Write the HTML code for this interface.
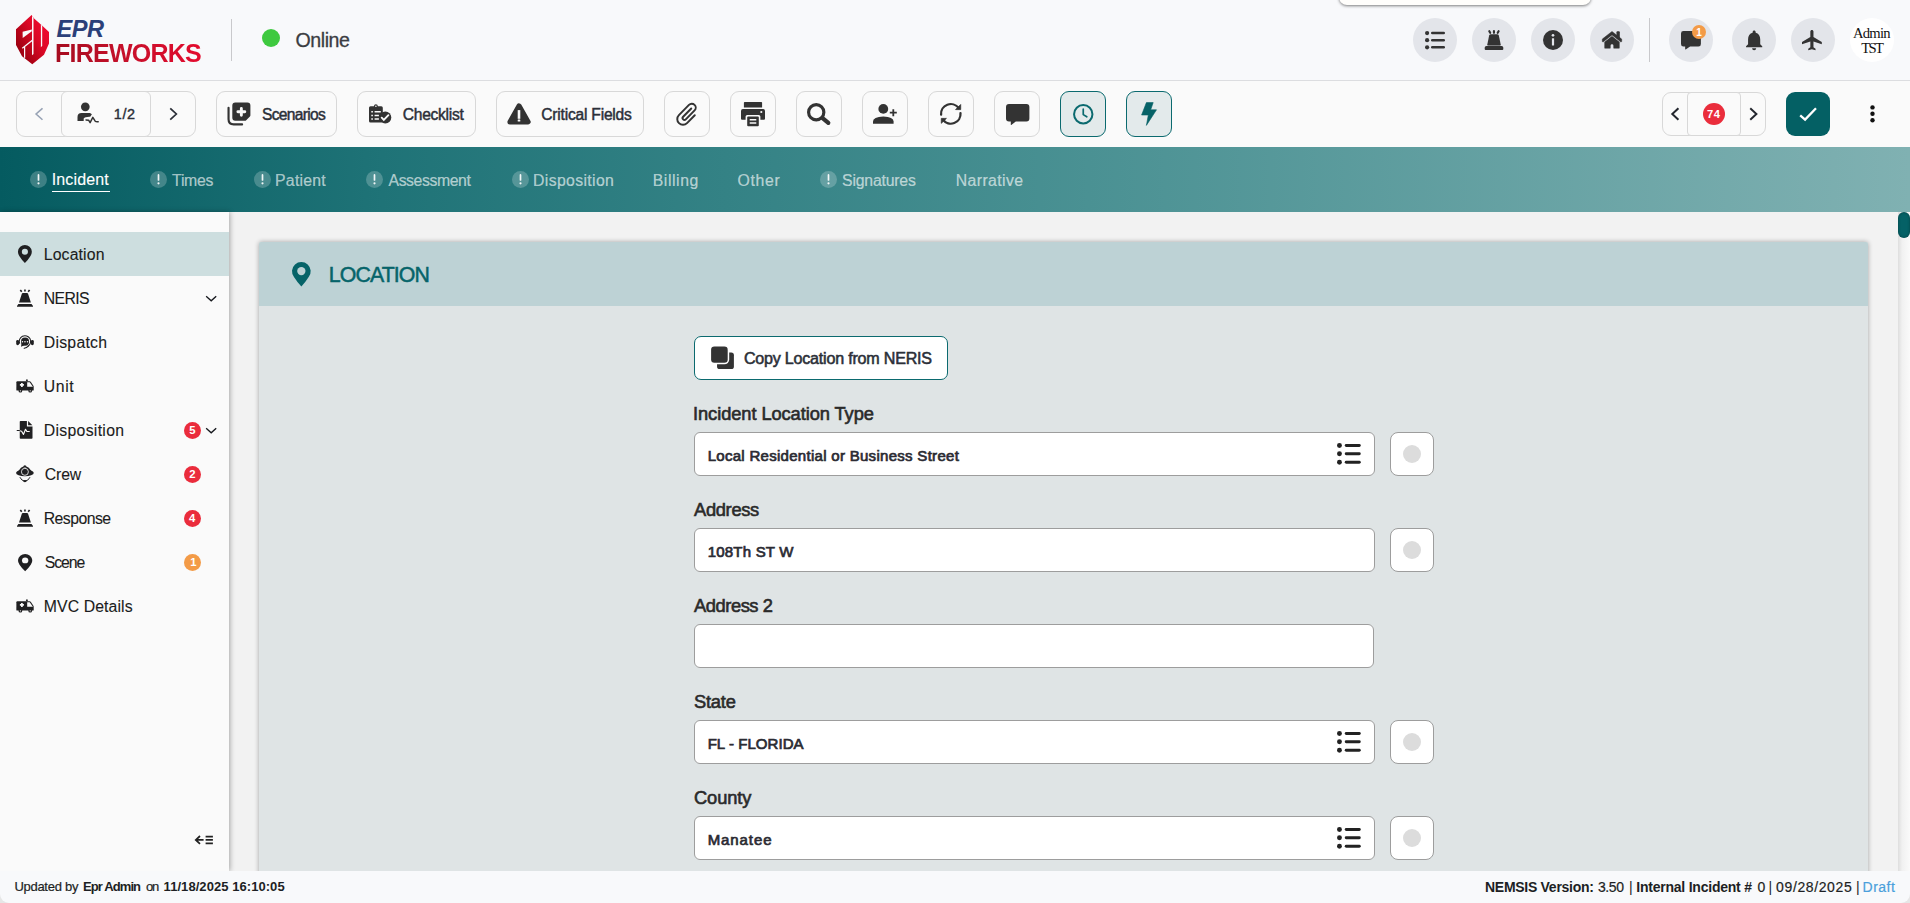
<!DOCTYPE html>
<html lang="en"><head><meta charset="utf-8"><title>EPR Fireworks - Incident</title>
<style>
*{box-sizing:border-box}
html,body{margin:0;padding:0}
body{width:1910px;height:903px;overflow:hidden;position:relative;background:#f2f2f2;font-family:"Liberation Sans",sans-serif;color:#222}
.a{position:absolute}
.t{position:absolute;white-space:nowrap;transform-origin:0 0;display:block}
svg{position:absolute;overflow:visible}
#hdr{left:0;top:0;width:1910px;height:81px;background:#f8f9fb;border-bottom:1px solid #dcdde0}
#tip{left:1339px;top:-20px;width:252px;height:25px;background:#fffefb;border-radius:8px;box-shadow:0 1px 3px rgba(0,0,0,.5)}
.vsep{width:1px;background:#c9c9cc}
.circ{width:44px;height:44px;border-radius:50%;background:#e3e5ea}
#tb{left:0;top:81px;width:1910px;height:66px;background:#fafafa}
.btn{border:1px solid #d8d8d8;border-radius:9px;background:#fafafa}
.btn.on{border-color:#0b6a6f;background:#e3eaeb}
#tabs{left:0;top:147px;width:1910px;height:65px;background:linear-gradient(90deg,#055b60 0%,#1f7377 20%,#348285 38%,#4a9193 57%,#80b1b2 100%)}
.ex{width:17px;height:17px;border-radius:50%;background:rgba(255,255,255,.22)}
#side{left:0;top:212px;width:229px;height:659px;background:#fafafa;box-shadow:1px 0 5px rgba(0,0,0,.32)}
#sel{left:0;top:20px;width:229px;height:44px;background:#cddedf}
.bdg{width:17px;height:17px;border-radius:50%;background:#ea2c3c}
#card{left:259px;top:242px;width:1609px;height:640px;background:#dfe4e5;border-radius:2px 2px 0 0;box-shadow:0 0 5px rgba(0,0,0,.33)}
#chead{left:0;top:0;width:1609px;height:64px;background:#bdd2d5;border-radius:2px 2px 0 0}
.inp{height:44px;background:#fff;border:1px solid #9d9d9d;border-radius:6px}
.sq{width:44px;height:44px;background:#fff;border:1px solid #9d9d9d;border-radius:8px}
.sq i{position:absolute;left:12px;top:12px;width:18px;height:18px;border-radius:50%;background:#dcdcdc}
#footbg{left:0;top:885px;width:1910px;height:18px;background:#e6e6e6}
#foot{left:0;top:871px;width:1910px;height:32px;background:#f8f9fb;border-radius:0 0 9px 9px}
#strack{left:1898px;top:212px;width:12px;height:659px;background:linear-gradient(90deg,#dedede 0,#f1f1f1 35%,#fafafa 100%)}
#sthumb{left:1898px;top:212px;width:12px;height:26px;border-radius:6px;background:#056166;box-shadow:inset 0 0 3px rgba(0,0,0,.35)}

</style></head>
<body>
<div class="a" id="hdr"></div>
<div class="a" id="tip"></div>
<div class="a vsep" style="left:231px;top:19px;height:42px"></div>
<div class="a" style="left:262px;top:29px;width:18px;height:18px;border-radius:50%;background:#3ec93f"></div>
<!-- header circles -->
<div class="a circ" style="left:1413px;top:18px"></div>
<div class="a circ" style="left:1472px;top:18px"></div>
<div class="a circ" style="left:1531px;top:18px"></div>
<div class="a circ" style="left:1590px;top:18px"></div>
<div class="a vsep" style="left:1649px;top:18px;height:44px"></div>
<div class="a circ" style="left:1669px;top:18px"></div>
<div class="a circ" style="left:1732px;top:18px"></div>
<div class="a circ" style="left:1791px;top:18px"></div>
<div class="a circ" style="left:1850px;top:18px;background:#fff"></div>
<!-- toolbar -->
<div class="a" id="tb"></div>
<div class="a btn" style="left:16px;top:91px;width:180px;height:46px"></div>
<div class="a btn" style="left:61px;top:91px;width:90px;height:46px;border-radius:6px"></div>
<div class="a btn" style="left:216px;top:91px;width:121px;height:46px"></div>
<div class="a btn" style="left:357px;top:91px;width:119px;height:46px"></div>
<div class="a btn" style="left:496px;top:91px;width:148px;height:46px"></div>
<div class="a btn" style="left:664px;top:91px;width:46px;height:46px"></div>
<div class="a btn" style="left:730px;top:91px;width:46px;height:46px"></div>
<div class="a btn" style="left:796px;top:91px;width:46px;height:46px"></div>
<div class="a btn" style="left:862px;top:91px;width:46px;height:46px"></div>
<div class="a btn" style="left:928px;top:91px;width:46px;height:46px"></div>
<div class="a btn" style="left:994px;top:91px;width:46px;height:46px"></div>
<div class="a btn on" style="left:1060px;top:91px;width:46px;height:46px"></div>
<div class="a btn on" style="left:1126px;top:91px;width:46px;height:46px"></div>
<div class="a btn" style="left:1662px;top:92px;width:104px;height:44px"></div>
<div class="a btn" style="left:1687px;top:92px;width:54px;height:44px;border-radius:4px"></div>
<div class="a" style="left:1703px;top:103px;width:22px;height:22px;border-radius:50%;background:#ea2d3c"></div>
<div class="a" style="left:1786px;top:92px;width:44px;height:44px;border-radius:9px;background:#046064"></div>
<!-- tabs -->
<div class="a" id="tabs"></div>
<div class="a" style="left:52px;top:190.6px;width:58px;height:1.3px;background:#fff"></div>
<!--EXCL-->
<!-- sidebar -->
<div class="a" id="side"><div class="a" id="sel"></div></div>
<div class="a bdg" style="left:184px;top:422px"></div>
<div class="a bdg" style="left:184px;top:466px"></div>
<div class="a bdg" style="left:184px;top:510px"></div>
<div class="a bdg" style="left:184px;top:554px;background:#f39b47"></div>
<!-- card -->
<div class="a" id="card"><div class="a" id="chead"></div></div>
<div class="a" style="left:694px;top:336px;width:254px;height:44px;background:#fff;border:1px solid #0b6a6f;border-radius:7px"></div>
<div class="a inp" style="left:694px;top:432px;width:681px"></div><div class="a sq" style="left:1390px;top:432px"><i></i></div>
<div class="a inp" style="left:694px;top:528px;width:681px"></div><div class="a sq" style="left:1390px;top:528px"><i></i></div>
<div class="a inp" style="left:694px;top:624px;width:680px"></div>
<div class="a inp" style="left:694px;top:720px;width:681px"></div><div class="a sq" style="left:1390px;top:720px"><i></i></div>
<div class="a inp" style="left:694px;top:816px;width:681px"></div><div class="a sq" style="left:1390px;top:816px"><i></i></div>
<!-- scrollbar + footer -->
<div class="a" id="strack"></div><div class="a" id="sthumb"></div>
<div class="a" id="footbg"></div><div class="a" id="foot"></div>
<svg style="left:16.00px;top:15.00px" width="33.00" height="49.30" viewBox="0 0 33 49.300" preserveAspectRatio="none" ><defs><linearGradient id="lg" x1="0.950" y1="0.200" x2="0.150" y2="0.850"><stop offset="0" stop-color="#f20a30"/><stop offset=".4" stop-color="#dc0826"/><stop offset="1" stop-color="#98000f"/></linearGradient></defs><path d="M15.600 0L18.100 3.600L26.600 11L33 16.900V28.400L28 39.800L16.300 49.300L6 41.200L0 29.900V14.300Z" fill="url(#lg)"/><path d="M16 0.600V40.300L17.500 39V2.800Z" fill="#f8f9fb"/><path d="M6.600 16.800L15.800 14.500V16.200L6.700 23Z" fill="#f8f9fb"/><path d="M6.300 33.200L16.400 25.200" stroke="#f8f9fb" stroke-width="1.300"/><path d="M8.600 31.600V42.800" stroke="#f8f9fb" stroke-width="1.250"/><path d="M24.900 9.600V32.200L26.200 30.800V10.800Z" fill="#f8f9fb"/></svg>
<svg style="left:1424.00px;top:29.70px" width="22.00" height="20.40" viewBox="0 0 22.00 20.40" preserveAspectRatio="none" ><circle cx="3.10" cy="3.10" r="2.10" fill="#333333"/><path d="M8.25 3.10H19.75" stroke="#333333" stroke-width="2.50" stroke-linecap="round"/><circle cx="3.10" cy="10.20" r="2.10" fill="#333333"/><path d="M8.25 10.20H19.75" stroke="#333333" stroke-width="2.50" stroke-linecap="round"/><circle cx="3.10" cy="17.30" r="2.10" fill="#333333"/><path d="M8.25 17.30H19.75" stroke="#333333" stroke-width="2.50" stroke-linecap="round"/></svg>
<svg style="left:1476.00px;top:24.00px" width="36.00" height="32.00" viewBox="0 0 36 32" preserveAspectRatio="none" ><path d="M13.300 7.200L14.200 8.800M17.950 7V8.800M22.600 7.200L21.700 8.800" stroke="#333333" stroke-width="2.150" stroke-linecap="round" fill="none"/><path d="M15 10.300H21Q22.500 10.300 22.850 11.500L24.800 20.900H11.200L13.150 11.500Q13.500 10.300 15 10.300Z" fill="#333333"/><rect x="11.500" y="20.800" width="13" height="1.400" fill="#333333" fill-opacity=".6"/><path d="M10.400 22H25.600Q27.300 22 27.300 23.700V24.900Q27.300 25.900 26.300 25.900H9.700Q8.700 25.900 8.700 24.900V23.700Q8.700 22 10.400 22Z" fill="#333333"/></svg>
<svg style="left:1543.00px;top:30.00px" width="20.00" height="20.00" viewBox="0 0 20 20" preserveAspectRatio="none" ><circle cx="10" cy="10" r="10" fill="#333333"/><circle cx="10" cy="5.300" r="1.350" fill="#e3e5ea"/><rect x="8.900" y="8.200" width="2.200" height="7.400" rx=".5" fill="#e3e5ea"/></svg>
<svg style="left:1595.00px;top:24.00px" width="36.00" height="32.00" viewBox="0 0 36 32" preserveAspectRatio="none" ><path d="M7.300 15.100L17 7.450L26.700 15.100V17.600L25.900 18L17 11L8.100 18L7.300 17.600Z" fill="#333333" stroke="#333333" stroke-width=".5" stroke-linejoin="round"/><rect x="21.500" y="7.300" width="3.300" height="7" rx=".9" fill="#333333"/><path d="M9.400 17.950L17 11.950L24.600 17.950V23.700Q24.600 24.600 23.700 24.600H19.300Q18.400 24.600 18.400 23.700V21.400Q18.400 20.300 17 20.300Q15.600 20.300 15.600 21.400V23.700Q15.600 24.600 14.700 24.600H10.300Q9.400 24.600 9.400 23.700Z" fill="#333333"/></svg>
<svg style="left:1681.00px;top:30.60px" width="19.90" height="18.50" viewBox="0 0 22 20" preserveAspectRatio="none" ><path d="M2.700 0H19.300Q22 0 22 2.700V14.100Q22 16.800 19.300 16.800H10L5.600 19.700Q4.600 20.300 4.600 19.200V16.800H2.700Q0 16.800 0 14.100V2.700Q0 0 2.700 0Z" fill="#333333"/></svg>
<svg style="left:1741.85px;top:27.85px" width="24.30" height="24.30" viewBox="0 0 24 24" preserveAspectRatio="none" ><path d="M12 22c1.100 0 2-.9 2-2h-4c0 1.100.89 2 2 2zm6-6v-5c0-3.070-1.640-5.640-4.500-6.320V4c0-.83-.67-1.500-1.500-1.500s-1.500.67-1.500 1.500v.68C7.630 5.360 6 7.920 6 11v5l-2 2v1h16v-1l-2-2z" fill="#333333"/></svg>
<svg style="left:1802.00px;top:30.00px" width="19.80" height="20.20" viewBox="2 2 19 20" preserveAspectRatio="none" ><path d="M21 16v-2l-8-5V3.500c0-.83-.67-1.500-1.500-1.500S10 2.670 10 3.500V9l-8 5v2l8-2.500V19l-2 1.500V22l3.500-1 3.500 1v-1.500L13 19v-5.500l8 2.500z" fill="#333333"/></svg>
<svg style="left:35.00px;top:108.00px" width="7.70" height="12.00" viewBox="0 0 7.70 12.00" preserveAspectRatio="none" ><path d="M6.90 0.80L1.10 6.00L6.90 11.20" fill="none" stroke="#98a3b5" stroke-width="1.6" stroke-linecap="square" stroke-linejoin="miter"/></svg>
<svg style="left:72.00px;top:98.00px" width="32.00" height="30.00" viewBox="0 0 32 30" preserveAspectRatio="none" ><circle cx="13.300" cy="8.800" r="4.350" fill="#333333"/><path d="M5.500 22.900V19Q5.500 15.100 9.500 15.100H18L19.900 16.300L18.200 18.800Q13 18.600 11.700 20.600V22.900Z" fill="#333333"/><path d="M14 21.900L16.600 22.200L18.100 24.600L20.800 19.300L23.200 23.200Q24 23.900 26.200 23.700" fill="none" stroke="#333333" stroke-width="1.500" stroke-linejoin="round" stroke-linecap="round"/></svg>
<svg style="left:169.80px;top:108.00px" width="7.50" height="12.00" viewBox="0 0 7.50 12.00" preserveAspectRatio="none" ><path d="M0.85 0.85L6.35 6.00L0.85 11.15" fill="none" stroke="#2b2f38" stroke-width="1.7" stroke-linecap="square" stroke-linejoin="miter"/></svg>
<svg style="left:222.00px;top:98.00px" width="32.00" height="32.00" viewBox="0 0 32 32" preserveAspectRatio="none" ><path d="M13.300 4.400H25.400Q28.400 4.400 28.400 7.400V17.300Q28.400 18 27.900 18.500L24.200 22.200Q23.700 22.700 23 22.700H13.300Q10.300 22.700 10.300 19.700V7.400Q10.300 4.400 13.300 4.400Z" fill="#333333"/><path d="M19.350 10.400V17.200M15.900 13.800H22.800" stroke="#fafafa" stroke-width="2.900" stroke-linecap="round"/><path d="M6.550 9.700V21.300Q6.550 26.400 11.700 26.400H20.100" fill="none" stroke="#333333" stroke-width="2.150" stroke-linecap="round"/></svg>
<svg style="left:364.00px;top:98.00px" width="32.00" height="32.00" viewBox="0 0 32 32" preserveAspectRatio="none" ><path d="M6.500 8.300H9.900Q10.100 6.200 11.900 6.200Q13.700 6.200 13.900 8.300H17.300Q18.800 8.300 18.800 9.800V23.100Q18.800 24.600 17.300 24.600H6.500Q5 24.600 5 23.100V9.800Q5 8.300 6.500 8.300Z" fill="#333333"/><circle cx="11.900" cy="8.300" r=".8" fill="#fafafa"/><path d="M7.300 13.650H8.900M10.600 13.650H16.800M7.300 17.400H8.900M10.600 17.400H14.900M7.300 21.100H8.900M10.600 21.100H14.900" stroke="#fafafa" stroke-width="1.500"/><circle cx="21.300" cy="19.500" r="6" fill="#333333"/><path d="M17.700 19.700L19.800 21.800L24.400 17.200" fill="none" stroke="#fafafa" stroke-width="1.900" stroke-linecap="round" stroke-linejoin="miter"/></svg>
<svg style="left:503.00px;top:98.00px" width="32.00" height="32.00" viewBox="0 0 32 32" preserveAspectRatio="none" ><path d="M16.050 7.800L25.200 23.900H6.900Z" fill="#333333" stroke="#333333" stroke-width="5" stroke-linejoin="round"/><path d="M16 12.100V20.800" stroke="#fafafa" stroke-width="2.600"/><rect x="14.700" y="21.500" width="2.600" height="2" rx=".5" fill="#fafafa"/></svg>
<svg style="left:671.30px;top:98.90px" width="32.00" height="32.00" viewBox="-16 -16 32 32" preserveAspectRatio="none" ><g transform="rotate(44.500)"><path d="M5.700 -5.300V5.750A5.700 5.700 0 0 1 -5.700 5.750V-8.600A3.950 3.950 0 0 1 2.200 -8.600V4A1.850 1.850 0 0 1 -1.500 4V-7.600" fill="none" stroke="#333333" stroke-width="1.950" stroke-linecap="round"/></g></svg>
<svg style="left:741.00px;top:102.00px" width="24.00" height="24.30" viewBox="0 0 24 24.300" preserveAspectRatio="none" ><path d="M3.700 0H20.300Q21.100 0 21.100 .8V5.600H2.900V.8Q2.900 0 3.700 0Z" fill="#333333"/><path d="M1.800 7.100H22.200Q24 7.100 24 8.900V16.800Q24 17.800 23 17.800H19.400V14.600Q19.400 13 17.800 13H6.200Q4.600 13 4.600 14.600V17.800H1Q0 17.800 0 16.800V8.900Q0 7.100 1.800 7.100Z" fill="#333333"/><circle cx="20.300" cy="10" r="1.100" fill="#fafafa"/><path d="M7.200 14.600H16.800Q17.800 14.600 17.800 15.600V23.300Q17.800 24.300 16.800 24.300H7.200Q6.200 24.300 6.200 23.300V15.600Q6.200 14.600 7.200 14.600Z" fill="#333333"/><path d="M8.700 17.800H15.300M8.700 21.100H15.300" stroke="#fafafa" stroke-width="1.500"/></svg>
<svg style="left:807.00px;top:102.70px" width="23.80" height="22.20" viewBox="0 0 24 22.400" preserveAspectRatio="none" ><circle cx="9.300" cy="9.300" r="7.700" fill="none" stroke="#333333" stroke-width="3.200"/><path d="M15.700 15.200L21.500 20" stroke="#333333" stroke-width="4.200" stroke-linecap="round"/></svg>
<svg style="left:872.80px;top:104.10px" width="24.30" height="19.80" viewBox="0 0 24.300 19.800" preserveAspectRatio="none" ><circle cx="10.300" cy="4.900" r="4.900" fill="#333333"/><path d="M0 19.800V17.600Q0 12.600 10.300 12.400Q20.600 12.600 20.600 17.600V19.800Z" fill="#333333"/><path d="M20.300 5.200V12.200M16.800 8.700H23.800" stroke="#333333" stroke-width="1.800"/></svg>
<svg style="left:865.00px;top:96.00px" width="110.00" height="36.00" viewBox="0 0 110 36" preserveAspectRatio="none" ><path d="M76.100 18.700A9.750 9.750 0 0 1 93.600 12" fill="none" stroke="#333333" stroke-width="2.300" stroke-linecap="round"/><path d="M95.500 17.100A9.750 9.750 0 0 1 78 23.800" fill="none" stroke="#333333" stroke-width="2.300" stroke-linecap="round"/><path d="M95.700 8.500V13.600H90.600Z" fill="#333333" stroke="#333333" stroke-width=".8" stroke-linejoin="round"/><path d="M76.300 27.300V22.400H81.400Z" fill="#333333" stroke="#333333" stroke-width=".8" stroke-linejoin="round"/></svg>
<svg style="left:1005.70px;top:103.70px" width="23.40" height="21.20" viewBox="0 0 23.400 21.200" preserveAspectRatio="none" ><path d="M3 0H20.400Q23.400 0 23.400 3V14.400Q23.400 17.400 20.400 17.400H9.800L5.600 20.800Q4.800 21.400 4.800 20.400V17.400H3Q0 17.400 0 14.400V3Q0 0 3 0Z" fill="#333333"/></svg>
<svg style="left:1072.90px;top:103.70px" width="20.50" height="20.50" viewBox="0 0 20.500 20.500" preserveAspectRatio="none" ><circle cx="10.250" cy="10.250" r="9.200" fill="none" stroke="#0b6a6f" stroke-width="2"/><path d="M10.250 5.200V10.600L13.800 12.800" fill="none" stroke="#0b6a6f" stroke-width="1.700" stroke-linecap="round" stroke-linejoin="round"/></svg>
<svg style="left:1136.00px;top:98.00px" width="26.00" height="32.00" viewBox="0 0 26 32" preserveAspectRatio="none" ><path d="M10.400 4.600H17.200L14.700 11.800H20.500L10.400 27.400L12.300 17H5.600Z" fill="#066267" stroke="#066267" stroke-width=".6" stroke-linejoin="round"/></svg>
<svg style="left:1671.00px;top:108.00px" width="7.70" height="12.00" viewBox="0 0 7.70 12.00" preserveAspectRatio="none" ><path d="M6.70 1.00L1.30 6.00L6.70 11.00" fill="none" stroke="#23262e" stroke-width="2" stroke-linecap="square" stroke-linejoin="miter"/></svg>
<svg style="left:1749.50px;top:108.00px" width="7.70" height="12.00" viewBox="0 0 7.70 12.00" preserveAspectRatio="none" ><path d="M1.00 1.00L6.40 6.00L1.00 11.00" fill="none" stroke="#23262e" stroke-width="2" stroke-linecap="square" stroke-linejoin="miter"/></svg>
<svg style="left:1799.10px;top:107.40px" width="18.20" height="13.70" viewBox="0 0 18.200 13.700" preserveAspectRatio="none" ><path d="M1.200 8.300L6.100 12.600L17 1.300" fill="none" stroke="#fff" stroke-width="2.300" stroke-linecap="butt" stroke-linejoin="miter"/></svg>
<svg style="left:1869.50px;top:105.00px" width="5.00" height="17.80" viewBox="0 0 5 17.800" preserveAspectRatio="none" ><circle cx="2.500" cy="2.400" r="2.200" fill="#111"/><circle cx="2.500" cy="8.800" r="2.200" fill="#111"/><circle cx="2.500" cy="15.300" r="2.200" fill="#111"/></svg>
<div class="a ex" style="left:29.9px;top:170.9px"></div><svg style="left:36.90px;top:174.20px" width="3.00" height="10.60" viewBox="0 0 3 10.600" preserveAspectRatio="none" ><path d="M1.500 .9V6" stroke="#fff" stroke-opacity=".92" stroke-width="1.700" stroke-linecap="round"/><circle cx="1.500" cy="9.300" r="1.100" fill="#fff" fill-opacity=".92"/></svg>
<div class="a ex" style="left:149.9px;top:170.9px"></div><svg style="left:156.90px;top:174.20px" width="3.00" height="10.60" viewBox="0 0 3 10.600" preserveAspectRatio="none" ><path d="M1.500 .9V6" stroke="#fff" stroke-opacity=".92" stroke-width="1.700" stroke-linecap="round"/><circle cx="1.500" cy="9.300" r="1.100" fill="#fff" fill-opacity=".92"/></svg>
<div class="a ex" style="left:253.9px;top:170.9px"></div><svg style="left:260.90px;top:174.20px" width="3.00" height="10.60" viewBox="0 0 3 10.600" preserveAspectRatio="none" ><path d="M1.500 .9V6" stroke="#fff" stroke-opacity=".92" stroke-width="1.700" stroke-linecap="round"/><circle cx="1.500" cy="9.300" r="1.100" fill="#fff" fill-opacity=".92"/></svg>
<div class="a ex" style="left:365.9px;top:170.9px"></div><svg style="left:372.90px;top:174.20px" width="3.00" height="10.60" viewBox="0 0 3 10.600" preserveAspectRatio="none" ><path d="M1.500 .9V6" stroke="#fff" stroke-opacity=".92" stroke-width="1.700" stroke-linecap="round"/><circle cx="1.500" cy="9.300" r="1.100" fill="#fff" fill-opacity=".92"/></svg>
<div class="a ex" style="left:511.7px;top:170.9px"></div><svg style="left:518.70px;top:174.20px" width="3.00" height="10.60" viewBox="0 0 3 10.600" preserveAspectRatio="none" ><path d="M1.500 .9V6" stroke="#fff" stroke-opacity=".92" stroke-width="1.700" stroke-linecap="round"/><circle cx="1.500" cy="9.300" r="1.100" fill="#fff" fill-opacity=".92"/></svg>
<div class="a ex" style="left:819.7px;top:170.9px"></div><svg style="left:826.70px;top:174.20px" width="3.00" height="10.60" viewBox="0 0 3 10.600" preserveAspectRatio="none" ><path d="M1.500 .9V6" stroke="#fff" stroke-opacity=".92" stroke-width="1.700" stroke-linecap="round"/><circle cx="1.500" cy="9.300" r="1.100" fill="#fff" fill-opacity=".92"/></svg>
<svg style="left:18.20px;top:245.00px" width="13.80" height="18.10" viewBox="0 0 18.700 24.500" preserveAspectRatio="none" ><path d="M9.350 24.500Q5 20 1.990 15.120A9.350 9.350 0 1 1 16.710 15.120Q13.700 20 9.350 24.500Z" fill="#202022"/><circle cx="9.350" cy="9.100" r="4.150" fill="#cddedf"/></svg>
<svg style="left:12.00px;top:284.00px" width="26.00" height="28.00" viewBox="0 0 26 28" preserveAspectRatio="none" ><g transform="translate(13 14.100) scale(1.0) translate(-13 -14.100)"><path d="M8.300 5.900L9.700 7.700M12.950 5.500V7.600M17.600 5.900L16.200 7.700" stroke="#202022" stroke-width="1.600" fill="none"/><path d="M10.900 9H15Q15.800 9 16.050 9.800L18.900 18.600H7L9.850 9.800Q10.100 9 10.900 9Z" fill="#202022"/><path d="M6.400 20H19.500L21 22V22.800H5V22Z" fill="#202022"/></g></svg>
<svg style="left:12.00px;top:328.00px" width="26.00" height="28.00" viewBox="0 0 26 28" preserveAspectRatio="none" ><path d="M7.700 15.600A5.700 5.700 0 1 1 16 18.200" fill="none" stroke="#202022" stroke-width="1.050"/><path d="M16.400 17.900Q14.800 20.100 12.200 20.300" fill="none" stroke="#202022" stroke-width="1.150" stroke-linecap="round"/><circle cx="13.050" cy="13.650" r="4.050" fill="#202022"/><path d="M9.600 15.300L9 18.800L12.400 17.300Z" fill="#202022"/><circle cx="10.450" cy="13.650" r=".75" fill="#fafafa"/><circle cx="12.950" cy="13.650" r=".75" fill="#fafafa"/><circle cx="15.500" cy="13.650" r=".75" fill="#fafafa"/><rect x="4.200" y="11.900" width="2.900" height="5.300" rx="1.400" fill="#202022"/><rect x="18.900" y="11.900" width="2.900" height="5.300" rx="1.400" fill="#202022"/></svg>
<svg style="left:12.00px;top:372.00px" width="26.00" height="28.00" viewBox="0 0 26 28" preserveAspectRatio="none" ><path d="M5.350 9.200H17.600Q18.400 9.200 18.900 9.900L21.400 13.800Q21.700 14.300 21.700 14.900V17.900Q21.700 18.600 21 18.600H5.050Q4.350 18.600 4.350 17.900V10.200Q4.350 9.200 5.350 9.200Z" fill="#202022"/><path d="M13.700 9.300L14.500 7.300H15.400L16 9.300Z" fill="#202022"/><path d="M15.200 10.300H17.700L20.900 14.700H15.200Z" fill="#fafafa"/><path d="M9.900 10.900V14.900M7.900 12.900H11.900" stroke="#fafafa" stroke-width="1.700"/><circle cx="8.400" cy="18.700" r="1.900" fill="#202022"/><circle cx="18.200" cy="18.700" r="1.900" fill="#202022"/><circle cx="8.400" cy="18.800" r=".65" fill="#fafafa"/><circle cx="18.200" cy="18.800" r=".65" fill="#fafafa"/></svg>
<svg style="left:12.00px;top:416.00px" width="26.00" height="28.00" viewBox="0 0 26 28" preserveAspectRatio="none" ><path d="M8.550 5H14.900V10.400H20.500V22Q20.500 22.800 19.700 22.800H8.550Q7.750 22.800 7.750 22V5.800Q7.750 5 8.550 5Z" fill="#202022"/><path d="M16.100 5.100L20.400 9.200H16.100Z" fill="#202022"/><path d="M5.200 14.500H8" stroke="#202022" stroke-width="1.200" stroke-linecap="round"/><path d="M7.750 14.700L9.600 15.200L11.500 18.400L13.500 13.300L14.900 15.500H17.700" fill="none" stroke="#fafafa" stroke-width="1.150" stroke-linejoin="round"/></svg>
<svg style="left:12.00px;top:460.00px" width="26.00" height="28.00" viewBox="0 0 26 28" preserveAspectRatio="none" ><ellipse cx="12.900" cy="13" rx="8.850" ry="3.150" fill="#202022"/><path d="M4.300 12.600Q7.200 10.600 9 7.800Q10.800 6.600 12.900 6.600Q15 6.600 16.800 7.800Q18.600 10.600 21.500 12.600Z" fill="#202022"/><circle cx="12.900" cy="6.700" r="1.550" fill="#202022"/><circle cx="12.900" cy="11.800" r="3.500" fill="none" stroke="#fafafa" stroke-width=".8"/><path d="M11.300 8.400A1.900 1.900 0 0 1 14.500 8.400" fill="none" stroke="#fafafa" stroke-width=".55" stroke-opacity=".75"/><path d="M8 17.500Q9.600 20.900 12.900 21.200Q16.200 20.900 17.900 17.500" fill="none" stroke="#202022" stroke-width=".95" stroke-linecap="round"/><ellipse cx="12.900" cy="21.100" rx="1.800" ry="1.100" fill="#202022"/></svg>
<svg style="left:12.00px;top:504.00px" width="26.00" height="28.00" viewBox="0 0 26 28" preserveAspectRatio="none" ><g transform="translate(13 14.100) scale(1.0) translate(-13 -14.100)"><path d="M8.300 5.900L9.700 7.700M12.950 5.500V7.600M17.600 5.900L16.200 7.700" stroke="#202022" stroke-width="1.600" fill="none"/><path d="M10.900 9H15Q15.800 9 16.050 9.800L18.900 18.600H7L9.850 9.800Q10.100 9 10.900 9Z" fill="#202022"/><path d="M6.400 20H19.500L21 22V22.800H5V22Z" fill="#202022"/></g></svg>
<svg style="left:17.90px;top:553.90px" width="14.30" height="17.30" viewBox="0 0 18.700 24.500" preserveAspectRatio="none" ><path d="M9.350 24.500Q5 20 1.990 15.120A9.350 9.350 0 1 1 16.710 15.120Q13.700 20 9.350 24.500Z" fill="#202022"/><circle cx="9.350" cy="9.100" r="4.150" fill="#fafafa"/></svg>
<svg style="left:12.00px;top:592.00px" width="26.00" height="28.00" viewBox="0 0 26 28" preserveAspectRatio="none" ><path d="M5.350 9.200H17.600Q18.400 9.200 18.900 9.900L21.400 13.800Q21.700 14.300 21.700 14.900V17.900Q21.700 18.600 21 18.600H5.050Q4.350 18.600 4.350 17.900V10.200Q4.350 9.200 5.350 9.200Z" fill="#202022"/><path d="M13.700 9.300L14.500 7.300H15.400L16 9.300Z" fill="#202022"/><path d="M15.200 10.300H17.700L20.900 14.700H15.200Z" fill="#fafafa"/><path d="M9.900 10.900V14.900M7.900 12.900H11.900" stroke="#fafafa" stroke-width="1.700"/><circle cx="8.400" cy="18.700" r="1.900" fill="#202022"/><circle cx="18.200" cy="18.700" r="1.900" fill="#202022"/><circle cx="8.400" cy="18.800" r=".65" fill="#fafafa"/><circle cx="18.200" cy="18.800" r=".65" fill="#fafafa"/></svg>
<svg style="left:205.90px;top:295.60px" width="10.40" height="5.80" viewBox="0 0 10.40 5.80" preserveAspectRatio="none" ><path d="M0.68 0.68L5.20 4.83L9.72 0.68" fill="none" stroke="#15171c" stroke-width="1.35" stroke-linecap="square" stroke-linejoin="miter"/></svg>
<svg style="left:205.90px;top:427.60px" width="10.40" height="5.80" viewBox="0 0 10.40 5.80" preserveAspectRatio="none" ><path d="M0.68 0.68L5.20 4.83L9.72 0.68" fill="none" stroke="#15171c" stroke-width="1.35" stroke-linecap="square" stroke-linejoin="miter"/></svg>
<svg style="left:190.00px;top:832.00px" width="26.00" height="16.00" viewBox="0 0 26 16" preserveAspectRatio="none" ><path d="M10 4L5.800 7.900L10 11.800M6.200 7.900H13.600" fill="none" stroke="#222" stroke-width="1.750" stroke-linejoin="miter"/><path d="M15.600 4.600H22.900M15.600 7.900H22.900M15.600 11.300H22.900" stroke="#222" stroke-width="1.700"/></svg>
<svg style="left:291.60px;top:261.70px" width="18.70" height="24.50" viewBox="0 0 18.700 24.500" preserveAspectRatio="none" ><path d="M9.350 24.500Q5 20 1.990 15.120A9.350 9.350 0 1 1 16.710 15.120Q13.700 20 9.350 24.500Z" fill="#066368"/><circle cx="9.350" cy="9.100" r="4.150" fill="#bdd2d5"/></svg>
<svg style="left:700.00px;top:338.00px" width="40.00" height="40.00" viewBox="0 0 40 40" preserveAspectRatio="none" ><rect x="17.050" y="14.600" width="16.850" height="16.400" rx="2.600" fill="#333333"/><rect x="9.600" y="7.100" width="19.600" height="19.200" rx="4.800" fill="#fff"/><rect x="11.100" y="8.600" width="16.600" height="16.200" rx="3.300" fill="#333333"/></svg>
<svg style="left:1336.15px;top:442.15px" width="25.75" height="23.70" viewBox="0 0 25.75 23.70" preserveAspectRatio="none" ><circle cx="3.45" cy="3.45" r="2.45" fill="#222"/><path d="M10.20 3.45H23.30" stroke="#222" stroke-width="2.90" stroke-linecap="round"/><circle cx="3.45" cy="11.75" r="2.45" fill="#222"/><path d="M10.20 11.75H23.30" stroke="#222" stroke-width="2.90" stroke-linecap="round"/><circle cx="3.45" cy="20.25" r="2.45" fill="#222"/><path d="M10.20 20.25H23.30" stroke="#222" stroke-width="2.90" stroke-linecap="round"/></svg>
<svg style="left:1336.15px;top:730.15px" width="25.75" height="23.70" viewBox="0 0 25.75 23.70" preserveAspectRatio="none" ><circle cx="3.45" cy="3.45" r="2.45" fill="#222"/><path d="M10.20 3.45H23.30" stroke="#222" stroke-width="2.90" stroke-linecap="round"/><circle cx="3.45" cy="11.75" r="2.45" fill="#222"/><path d="M10.20 11.75H23.30" stroke="#222" stroke-width="2.90" stroke-linecap="round"/><circle cx="3.45" cy="20.25" r="2.45" fill="#222"/><path d="M10.20 20.25H23.30" stroke="#222" stroke-width="2.90" stroke-linecap="round"/></svg>
<svg style="left:1336.15px;top:826.15px" width="25.75" height="23.70" viewBox="0 0 25.75 23.70" preserveAspectRatio="none" ><circle cx="3.45" cy="3.45" r="2.45" fill="#222"/><path d="M10.20 3.45H23.30" stroke="#222" stroke-width="2.90" stroke-linecap="round"/><circle cx="3.45" cy="11.75" r="2.45" fill="#222"/><path d="M10.20 11.75H23.30" stroke="#222" stroke-width="2.90" stroke-linecap="round"/><circle cx="3.45" cy="20.25" r="2.45" fill="#222"/><path d="M10.20 20.25H23.30" stroke="#222" stroke-width="2.90" stroke-linecap="round"/></svg>
<div class="a" style="left:1692.1px;top:25px;width:14px;height:14px;border-radius:50%;background:#f39b47"></div>
<span class="t" id="epr" style="left:56.60px;top:18.01px;font-size:23.60px;line-height:23.60px;color:#2b4079;font-weight:700;font-style:italic;letter-spacing:-0.537px;">EPR</span>
<span class="t" id="fw" style="left:55.00px;top:41.01px;font-size:25.00px;line-height:25.00px;color:#c4122c;font-weight:700;letter-spacing:-0.762px;background:linear-gradient(90deg,#a50b1f 0%,#c4102a 45%,#e30b2e 100%);-webkit-background-clip:text;background-clip:text;color:transparent;">FIREWORKS</span>
<span class="t" id="online" style="left:295.45px;top:31.00px;font-size:19.60px;line-height:19.60px;color:#3b3d42;-webkit-text-stroke:0.30px currentColor;letter-spacing:-0.428px;">Online</span>
<span class="t" id="pg" style="left:113.80px;top:107.01px;font-size:14.40px;line-height:14.40px;color:#2b2f38;-webkit-text-stroke:0.40px currentColor;letter-spacing:0.599px;">1/2</span>
<span class="t" id="scen" style="left:261.93px;top:107.01px;font-size:15.60px;line-height:15.60px;color:#2b2f38;-webkit-text-stroke:0.45px currentColor;letter-spacing:-0.687px;">Scenarios</span>
<span class="t" id="chk" style="left:402.73px;top:107.01px;font-size:15.60px;line-height:15.60px;color:#2b2f38;-webkit-text-stroke:0.45px currentColor;letter-spacing:-0.259px;">Checklist</span>
<span class="t" id="crit" style="left:541.23px;top:107.01px;font-size:15.60px;line-height:15.60px;color:#2b2f38;-webkit-text-stroke:0.45px currentColor;letter-spacing:-0.209px;">Critical Fields</span>
<span class="t" id="t1" style="left:51.65px;top:172.00px;font-size:16.00px;line-height:16.00px;color:#fff;-webkit-text-stroke:0.10px currentColor;letter-spacing:0.158px;">Incident</span>
<span class="t" id="t2" style="left:172.10px;top:173.00px;font-size:15.80px;line-height:15.80px;color:rgba(255,255,255,.62);-webkit-text-stroke:0.20px currentColor;letter-spacing:-0.279px;">Times</span>
<span class="t" id="t3" style="left:275.10px;top:173.00px;font-size:15.80px;line-height:15.80px;color:rgba(255,255,255,.62);-webkit-text-stroke:0.20px currentColor;letter-spacing:0.235px;">Patient</span>
<span class="t" id="t4" style="left:388.50px;top:173.00px;font-size:15.80px;line-height:15.80px;color:rgba(255,255,255,.62);-webkit-text-stroke:0.20px currentColor;letter-spacing:-0.405px;">Assessment</span>
<span class="t" id="t5" style="left:533.10px;top:173.00px;font-size:15.80px;line-height:15.80px;color:rgba(255,255,255,.62);-webkit-text-stroke:0.20px currentColor;letter-spacing:0.352px;">Disposition</span>
<span class="t" id="t6" style="left:652.70px;top:173.00px;font-size:15.80px;line-height:15.80px;color:rgba(255,255,255,.62);-webkit-text-stroke:0.20px currentColor;letter-spacing:0.573px;">Billing</span>
<span class="t" id="t7" style="left:737.50px;top:173.00px;font-size:15.80px;line-height:15.80px;color:rgba(255,255,255,.62);-webkit-text-stroke:0.20px currentColor;letter-spacing:0.688px;">Other</span>
<span class="t" id="t8" style="left:842.10px;top:173.00px;font-size:15.80px;line-height:15.80px;color:rgba(255,255,255,.62);-webkit-text-stroke:0.20px currentColor;letter-spacing:-0.203px;">Signatures</span>
<span class="t" id="t9" style="left:955.70px;top:173.00px;font-size:15.80px;line-height:15.80px;color:rgba(255,255,255,.62);-webkit-text-stroke:0.20px currentColor;letter-spacing:0.413px;">Narrative</span>
<span class="t" id="s0" style="left:43.75px;top:247.00px;font-size:15.80px;line-height:15.80px;color:#1b1c20;-webkit-text-stroke:0.10px currentColor;letter-spacing:0.137px;">Location</span>
<span class="t" id="s1" style="left:43.75px;top:291.00px;font-size:15.80px;line-height:15.80px;color:#1b1c20;-webkit-text-stroke:0.10px currentColor;letter-spacing:-0.635px;">NERIS</span>
<span class="t" id="s2" style="left:43.75px;top:335.00px;font-size:15.80px;line-height:15.80px;color:#1b1c20;-webkit-text-stroke:0.10px currentColor;letter-spacing:0.261px;">Dispatch</span>
<span class="t" id="s3" style="left:43.75px;top:379.00px;font-size:15.80px;line-height:15.80px;color:#1b1c20;-webkit-text-stroke:0.10px currentColor;letter-spacing:0.632px;">Unit</span>
<span class="t" id="s4" style="left:43.75px;top:423.00px;font-size:15.80px;line-height:15.80px;color:#1b1c20;-webkit-text-stroke:0.10px currentColor;letter-spacing:0.302px;">Disposition</span>
<span class="t" id="s5" style="left:44.75px;top:467.00px;font-size:15.80px;line-height:15.80px;color:#1b1c20;-webkit-text-stroke:0.10px currentColor;letter-spacing:-0.118px;">Crew</span>
<span class="t" id="s6" style="left:43.75px;top:511.00px;font-size:15.80px;line-height:15.80px;color:#1b1c20;-webkit-text-stroke:0.10px currentColor;letter-spacing:-0.535px;">Response</span>
<span class="t" id="s7" style="left:44.75px;top:555.00px;font-size:15.80px;line-height:15.80px;color:#1b1c20;-webkit-text-stroke:0.10px currentColor;letter-spacing:-1.051px;">Scene</span>
<span class="t" id="s8" style="left:43.75px;top:599.00px;font-size:15.80px;line-height:15.80px;color:#1b1c20;-webkit-text-stroke:0.10px currentColor;letter-spacing:0.102px;">MVC Details</span>
<span class="t" id="loc" style="left:328.85px;top:265.00px;font-size:21.30px;line-height:21.30px;color:#06646a;-webkit-text-stroke:0.50px currentColor;letter-spacing:-0.901px;">LOCATION</span>
<span class="t" id="copy" style="left:743.88px;top:350.01px;font-size:16.10px;line-height:16.10px;color:#2b2f38;-webkit-text-stroke:0.55px currentColor;letter-spacing:-0.218px;">Copy Location from NERIS</span>
<span class="t" id="l0" style="left:693.00px;top:405.00px;font-size:18.30px;line-height:18.30px;color:#2a2a2a;-webkit-text-stroke:0.60px currentColor;letter-spacing:-0.080px;">Incident Location Type</span>
<span class="t" id="l1" style="left:694.00px;top:501.00px;font-size:18.30px;line-height:18.30px;color:#2a2a2a;-webkit-text-stroke:0.60px currentColor;letter-spacing:-0.304px;">Address</span>
<span class="t" id="l2" style="left:694.00px;top:597.00px;font-size:18.30px;line-height:18.30px;color:#2a2a2a;-webkit-text-stroke:0.60px currentColor;letter-spacing:-0.430px;">Address 2</span>
<span class="t" id="l3" style="left:694.00px;top:693.00px;font-size:18.30px;line-height:18.30px;color:#2a2a2a;-webkit-text-stroke:0.60px currentColor;letter-spacing:-0.205px;">State</span>
<span class="t" id="l4" style="left:694.00px;top:789.00px;font-size:18.30px;line-height:18.30px;color:#2a2a2a;-webkit-text-stroke:0.60px currentColor;letter-spacing:-0.097px;">County</span>
<span class="t" id="v0" style="left:707.65px;top:448.01px;font-size:15.00px;line-height:15.00px;color:#2b2b33;-webkit-text-stroke:0.70px currentColor;letter-spacing:0.292px;">Local Residential or Business Street</span>
<span class="t" id="v1" style="left:707.65px;top:544.01px;font-size:15.00px;line-height:15.00px;color:#2b2b33;-webkit-text-stroke:0.70px currentColor;letter-spacing:0.218px;">108Th ST W</span>
<span class="t" id="v3" style="left:707.65px;top:736.01px;font-size:15.00px;line-height:15.00px;color:#2b2b33;-webkit-text-stroke:0.70px currentColor;letter-spacing:0.060px;">FL - FLORIDA</span>
<span class="t" id="v4" style="left:707.65px;top:832.01px;font-size:15.00px;line-height:15.00px;color:#2b2b33;-webkit-text-stroke:0.70px currentColor;letter-spacing:0.911px;">Manatee</span>
<span class="t" id="f1" style="left:14.40px;top:880.00px;font-size:13.00px;line-height:13.00px;color:#1d1f24;-webkit-text-stroke:0.20px currentColor;letter-spacing:-0.277px;">Updated by</span>
<span class="t" id="f2" style="left:83.00px;top:880.00px;font-size:13.00px;line-height:13.00px;color:#1d1f24;font-weight:700;letter-spacing:-0.898px;">Epr Admin</span>
<span class="t" id="f3" style="left:146.10px;top:880.00px;font-size:13.00px;line-height:13.00px;color:#1d1f24;-webkit-text-stroke:0.20px currentColor;letter-spacing:-1.430px;">on</span>
<span class="t" id="f4" style="left:163.60px;top:880.00px;font-size:13.00px;line-height:13.00px;color:#1d1f24;font-weight:700;letter-spacing:0.057px;">11/18/2025 16:10:05</span>
<span class="t" id="g1" style="left:1485.00px;top:880.01px;font-size:14.00px;line-height:14.00px;color:#1d1f24;font-weight:700;letter-spacing:-0.282px;">NEMSIS Version:</span>
<span class="t" id="g2" style="left:1598.00px;top:880.01px;font-size:14.00px;line-height:14.00px;color:#1d1f24;-webkit-text-stroke:0.20px currentColor;letter-spacing:-0.421px;">3.50</span>
<span class="t" id="g3" style="left:1629.00px;top:880.01px;font-size:14.00px;line-height:14.00px;color:#1d1f24;">|</span>
<span class="t" id="g4" style="left:1636.30px;top:880.01px;font-size:14.00px;line-height:14.00px;color:#1d1f24;font-weight:700;letter-spacing:-0.229px;">Internal Incident #</span>
<span class="t" id="g5" style="left:1757.40px;top:880.01px;font-size:14.00px;line-height:14.00px;color:#1d1f24;-webkit-text-stroke:0.20px currentColor;">0</span>
<span class="t" id="g6" style="left:1768.50px;top:880.01px;font-size:14.00px;line-height:14.00px;color:#1d1f24;">|</span>
<span class="t" id="g7" style="left:1776.10px;top:880.01px;font-size:14.00px;line-height:14.00px;color:#1d1f24;-webkit-text-stroke:0.20px currentColor;letter-spacing:0.613px;">09/28/2025</span>
<span class="t" id="g8" style="left:1856.00px;top:880.01px;font-size:14.00px;line-height:14.00px;color:#1d1f24;">|</span>
<span class="t" id="g9" style="left:1862.60px;top:880.01px;font-size:14.00px;line-height:14.00px;color:#4a9fdb;-webkit-text-stroke:0.20px currentColor;letter-spacing:0.463px;">Draft</span>
<span class="t" id="b74" style="left:1706.90px;top:109.00px;font-size:11.20px;line-height:11.20px;color:#fff;font-weight:700;letter-spacing:0.678px;">74</span>
<span class="t" id="b1" style="left:1696.30px;top:28.00px;font-size:10.00px;line-height:10.00px;color:#fff;font-weight:700;">1</span>
<span class="t" id="sb5" style="left:189.30px;top:425.01px;font-size:11.30px;line-height:11.30px;color:#fff;font-weight:700;">5</span>
<span class="t" id="sb2" style="left:189.30px;top:469.01px;font-size:11.30px;line-height:11.30px;color:#fff;font-weight:700;">2</span>
<span class="t" id="sb4" style="left:189.00px;top:513.01px;font-size:11.30px;line-height:11.30px;color:#fff;font-weight:700;">4</span>
<span class="t" id="sb1" style="left:190.30px;top:557.01px;font-size:11.30px;line-height:11.30px;color:#fff;font-weight:700;">1</span>
<span class="t" id="av1" style="left:1853.00px;top:26.01px;font-size:14.60px;line-height:14.60px;color:#111;font-family:'Liberation Serif', serif;letter-spacing:-0.761px;">Admin</span>
<span class="t" id="av2" style="left:1861.20px;top:41.01px;font-size:14.60px;line-height:14.60px;color:#111;font-family:'Liberation Serif', serif;letter-spacing:-1.665px;">TST</span>

</body></html>
